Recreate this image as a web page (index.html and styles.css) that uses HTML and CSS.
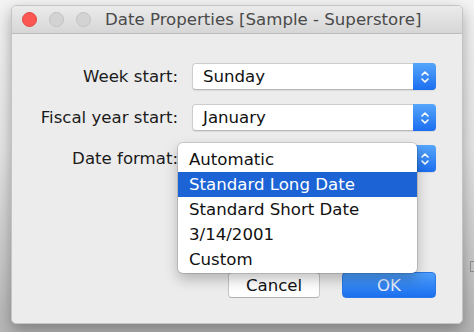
FILE: index.html
```html
<!DOCTYPE html>
<html lang="en">
<head>
  <meta charset="UTF-8" />
  <meta name="viewport" content="width=device-width, initial-scale=1.0" />
  <title>Date Properties</title>
  <link rel="stylesheet" href="styles.css">
</head>
<body>
  <div class="window">
    <div class="titlebar">
      <div class="lights">
        <span class="light close"></span>
        <span class="light"></span>
        <span class="light"></span>
      </div>
      <div class="title">Date Properties [Sample - Superstore]</div>
    </div>

    <div class="form">
      <label class="label">Week start:</label>
      <div class="select">
        <span class="value">Sunday</span>
        <span class="stepper"><svg width="10" height="16" viewBox="0 0 10 16"><path d="M2 6 L5 3 L8 6 M2 10 L5 13 L8 10" fill="none" stroke="#fff" stroke-width="1.6" stroke-linecap="round" stroke-linejoin="round"/></svg></span>
      </div>

      <label class="label">Fiscal year start:</label>
      <div class="select">
        <span class="value">January</span>
        <span class="stepper"><svg width="10" height="16" viewBox="0 0 10 16"><path d="M2 6 L5 3 L8 6 M2 10 L5 13 L8 10" fill="none" stroke="#fff" stroke-width="1.6" stroke-linecap="round" stroke-linejoin="round"/></svg></span>
      </div>

      <label class="label">Date format:</label>
      <div class="select open">
        <!-- value is covered by the open menu -->
        <span class="value"></span>
        <span class="stepper"><svg width="10" height="16" viewBox="0 0 10 16"><path d="M2 6 L5 3 L8 6 M2 10 L5 13 L8 10" fill="none" stroke="#fff" stroke-width="1.6" stroke-linecap="round" stroke-linejoin="round"/></svg></span>
        <ul class="menu">
          <li>Automatic</li>
          <li class="selected">Standard Long Date</li>
          <li>Standard Short Date</li>
          <li>3/14/2001</li>
          <li>Custom</li>
        </ul>
      </div>

      <div class="buttons">
        <button class="btn">Cancel</button>
        <button class="btn primary">OK</button>
      </div>
    </div>
  </div>
  <div class="other-window"></div>
</body>
</html>
```

FILE: styles.css
```css
* {
  box-sizing: border-box;
}
body {
  margin: 0;
  width: 474px;
  height: 332px;
  overflow: hidden;
  position: relative;
  font-family: 'DejaVu Sans', sans-serif;
  background: linear-gradient(#f4f4f4 0%, #e6e6e6 45%, #b6b6b6 100%);
  padding: 5px 11px 0;
}
.window {
  height: 319px;
  background: #ececec;
  border: 1px solid #c4c4c4;
  border-radius: 5px;
  box-shadow: 0 6px 16px rgba(0, 0, 0, 0.32);
  overflow: hidden;
}
.titlebar {
  height: 28px;
  display: flex;
  align-items: center;
  padding-left: 10px;
  background: linear-gradient(#ebebeb, #d6d6d6);
  border-bottom: 1px solid #bcbcbc;
}
.lights {
  display: flex;
  gap: 12px;
}
.light {
  width: 15px;
  height: 15px;
  border-radius: 50%;
  background: #d3d3d3;
  border: 1px solid #c2c2c2;
}
.light.close {
  background: #fc5652;
  border-color: #e24540;
}
.title {
  margin-left: 14px;
  font-size: 16.6px;
  color: #4a4a4a;
  white-space: nowrap;
}
.form {
  display: grid;
  grid-template-columns: 166px 244px;
  column-gap: 14px;
  row-gap: 14px;
  padding-top: 29px;
}
.label {
  text-align: right;
  font-size: 16.6px;
  color: #1b1b1b;
  line-height: 27px;
  white-space: nowrap;
}
.select {
  position: relative;
  height: 27px;
  display: flex;
  align-items: center;
  background: #fff;
  border: 1px solid #cdcdcd;
  border-bottom-color: #b8b8b8;
  border-radius: 4px;
  box-shadow: 0 1px 1px rgba(0, 0, 0, 0.08);
}
.value {
  flex: 1;
  padding-left: 10px;
  font-size: 16.6px;
  color: #111;
}
.stepper {
  width: 23px;
  height: 27px;
  margin: -1px -1px -1px 0;
  display: flex;
  align-items: center;
  justify-content: center;
  background: linear-gradient(#56a6fb, #1b6ef0);
  border-radius: 0 4px 4px 0;
}
.menu {
  position: absolute;
  left: -15px;
  top: -3px;
  width: 239px;
  margin: 0;
  padding: 4px 0 1px;
  list-style: none;
  background: #fff;
  border-radius: 5px;
  box-shadow: 0 0 0 1px rgba(0, 0, 0, 0.12), 0 6px 14px rgba(0, 0, 0, 0.25);
  z-index: 10;
}
.menu li {
  height: 25px;
  line-height: 25px;
  padding-left: 11px;
  font-size: 16.6px;
  color: #111;
  white-space: nowrap;
}
.menu li.selected {
  background: #1c63d6;
  color: #fff;
}
.buttons {
  grid-column: 2;
  display: flex;
  justify-content: flex-end;
  gap: 22px;
  margin-top: 86px;
}
.btn {
  height: 26px;
  width: 92px;
  font-family: inherit;
  font-size: 16.6px;
  color: #111;
  background: #fff;
  border: 1px solid #c6c6c6;
  border-bottom-color: #b0b0b0;
  border-radius: 4px;
  padding: 0;
}
.btn.primary {
  width: 94px;
  color: #e4eeff;
  background: linear-gradient(#4d9ffa, #1b6fee);
  border-color: #2a78e6;
}
.other-window {
  position: absolute;
  left: 470px;
  top: 261px;
  width: 8px;
  height: 11px;
  border: 1px solid #8a8a8a;
}
```
